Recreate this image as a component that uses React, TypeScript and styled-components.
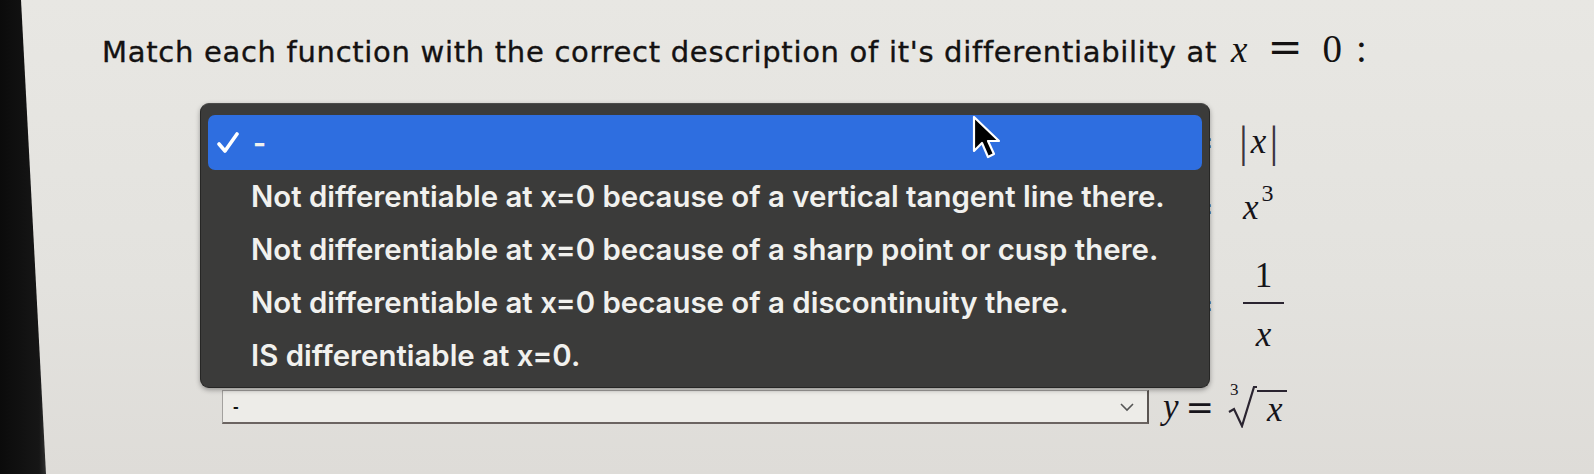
import styled, { createGlobalStyle } from 'styled-components';

const GlobalStyle = createGlobalStyle`
  html, body {
    margin: 0;
    padding: 0;
    background: #e3e2de;
  }
  #root {
    min-height: 474px;
  }
`;

const Screen = styled.div`
  display: flex;
  width: 1594px;
  height: 474px;
  overflow: hidden;
  background: linear-gradient(180deg, #e8e7e3 0%, #e3e2de 60%, #dedcd8 100%);
`;

// dark edge of the monitor, slanted by the camera angle
const Bezel = styled.div`
  width: 46px;
  flex-shrink: 0;
  background: linear-gradient(90deg, #0b0b0b 0%, #161616 85%, #303030 100%);
  clip-path: polygon(0 0, 21px 0, 46px 100%, 0 100%);
`;

const Page = styled.div`
  position: relative;
  flex: 1;
  padding: 26px 0 0 56px;
`;

const Question = styled.h1`
  margin: 0;
  font-family: 'DejaVu Sans', 'Open Sans', sans-serif;
  font-weight: 400;
  font-size: 29px;
  letter-spacing: 0.7px;
  line-height: 44px;
  color: #141212;
  -webkit-text-stroke: 0.35px #141212;
  display: flex;
  align-items: baseline;
  white-space: nowrap;
`;

const MathVar = styled.span<{ size?: number; ml?: number }>`
  font-family: 'Liberation Serif', 'DejaVu Serif', serif;
  font-style: italic;
  font-size: ${(p) => p.size ?? 35}px;
  margin-left: ${(p) => p.ml ?? 0}px;
  letter-spacing: 0;
  -webkit-text-stroke: 0;
`;

const MathOp = styled.span<{ gap?: number; size?: number }>`
  font-family: 'DejaVu Serif', 'Liberation Serif', serif;
  font-size: ${(p) => p.size ?? 34}px;
  margin: 0 ${(p) => p.gap ?? 10}px;
  letter-spacing: 0;
  -webkit-text-stroke: 0;
`;

const MathNum = styled.span`
  font-family: 'Liberation Serif', 'DejaVu Serif', serif;
  font-size: 39px;
  letter-spacing: 14px;
  -webkit-text-stroke: 0;
`;

const Rows = styled.div`
  display: flex;
  flex-direction: column;
  margin-top: 43px;
  margin-left: 120px;
`;

const Row = styled.div<{ h: number; mt?: number }>`
  display: flex;
  align-items: center;
  height: ${(p) => p.h}px;
  margin-top: ${(p) => p.mt ?? 0}px;
`;

const SelectBox = styled.div`
  display: flex;
  align-items: center;
  justify-content: space-between;
  width: 927px;
  height: 34px;
  box-sizing: border-box;
  padding: 0 12px 0 10px;
  background: #edece8;
  border: 1px solid #a3a19e;
  border-right: 2px solid #5a5552;
  border-bottom: 2px solid #6b6461;
  font-family: 'Liberation Sans', sans-serif;
  font-weight: 700;
  font-size: 17px;
  color: #111;
`;

const Chevron = styled.svg`
  width: 16px;
  height: 10px;
`;

const MathExpr = styled.div`
  display: flex;
  align-items: center;
  margin-left: 14px;
  color: #16141a;
  white-space: nowrap;
`;

const Abs = styled.span<{ ml?: number }>`
  font-family: 'Liberation Serif', serif;
  font-size: 44px;
  font-weight: 300;
  margin: 0 3px 0 ${(p) => p.ml ?? 3}px;
  color: #3a3440;
`;

const Sup = styled.span`
  font-family: 'Liberation Serif', serif;
  font-size: 24px;
  margin-left: 3px;
  transform: translateY(-15px);
`;

const Fraction = styled.span`
  display: inline-flex;
  flex-direction: column;
  align-items: center;
  font-family: 'Liberation Serif', serif;
  font-size: 35px;
  line-height: 34px;
  margin-left: 22px;
`;

const FracBar = styled.span`
  width: 41px;
  height: 2px;
  background: #2a2430;
  margin: 9px 0 14px;
`;

const Radical = styled.span`
  display: inline-flex;
  align-items: flex-end;
  position: relative;
  margin-left: 6px;
`;

const RootIndex = styled.span`
  font-family: 'Liberation Serif', serif;
  font-size: 17px;
  position: absolute;
  left: 3px;
  top: -6px;
`;

const Radicand = styled.span`
  font-family: 'Liberation Serif', serif;
  font-style: italic;
  font-size: 35px;
  border-top: 2px solid #2a2430;
  line-height: 36px;
  padding: 0 4px 0 10px;
`;

const Popup = styled.div`
  position: absolute;
  left: 154px;
  top: 103px;
  width: 1010px;
  height: 285px;
  box-sizing: border-box;
  padding: 11px 7px 0 7px;
  background: #3b3b3a;
  border: 1px solid #262625;
  border-top-color: #4c4c4b;
  border-radius: 9px;
  box-shadow: 0 2px 5px rgba(0, 0, 0, 0.35);
  font-family: 'Inter', 'Roboto', sans-serif;
  font-weight: 600;
  color: #f1f1ee;
`;

const SelectedOption = styled.div`
  display: flex;
  align-items: center;
  gap: 13px;
  height: 55px;
  padding-left: 8px;
  border-radius: 7px;
  background: #2e6ee0;
  font-size: 28px;
  font-weight: 700;
`;

const Option = styled.div`
  display: flex;
  align-items: center;
  height: 53px;
  padding-left: 43px;
  font-size: 29.4px;
  white-space: nowrap;
`;

const Cursor = styled.svg`
  position: absolute;
  left: 925px;
  top: 115px;
  width: 32px;
  height: 48px;
`;

const options = [
  'Not differentiable at x=0 because of a vertical tangent line there.',
  'Not differentiable at x=0 because of a sharp point or cusp there.',
  'Not differentiable at x=0 because of a discontinuity there.',
  'IS differentiable at x=0.',
];

function Select() {
  return (
    <SelectBox>
      <span>-</span>
      <Chevron viewBox="0 0 16 10">
        <path d="M2 2 L8 8 L14 2" fill="none" stroke="#555" strokeWidth="1.6" />
      </Chevron>
    </SelectBox>
  );
}

function YEquals() {
  return (
    <>
      <MathVar>y</MathVar>
      <MathOp gap={7}>=</MathOp>
    </>
  );
}

export default function App() {
  return (
    <>
      <GlobalStyle />
      <Screen>
        <Bezel />
        <Page>
          <Question>
            Match each function with the correct description of it's differentiability at&nbsp;
            <MathVar size={37} ml={4}>x</MathVar>
            <MathOp gap={20} size={42}>=</MathOp>
            <MathNum>0:</MathNum>
          </Question>

          <Rows>
            <Row h={50}>
              <Select />
              <MathExpr>
                <YEquals />
                <Abs ml={18}>|</Abs>
                <MathVar>x</MathVar>
                <Abs>|</Abs>
              </MathExpr>
            </Row>
            <Row h={82}>
              <Select />
              <MathExpr>
                <YEquals />
                <MathVar ml={22}>x</MathVar>
                <Sup>3</Sup>
              </MathExpr>
            </Row>
            <Row h={112}>
              <Select />
              <MathExpr>
                <YEquals />
                <Fraction>
                  <span>1</span>
                  <FracBar />
                  <MathVar>x</MathVar>
                </Fraction>
              </MathExpr>
            </Row>
            <Row h={34} mt={29}>
              <Select />
              <MathExpr>
                <YEquals />
                <Radical>
                  <RootIndex>3</RootIndex>
                  <svg width="30" height="42" viewBox="0 0 30 42">
                    <path d="M2 26 L7 23 L15 40 L27 1 L30 1" fill="none" stroke="#2a2430" strokeWidth="2.2" />
                  </svg>
                  <Radicand>x</Radicand>
                </Radical>
              </MathExpr>
            </Row>
          </Rows>

          <Popup>
            <SelectedOption>
              <svg width="24" height="22" viewBox="0 0 24 22">
                <path d="M3 12 L9 19 L21 2" fill="none" stroke="#fff" strokeWidth="3.6" strokeLinecap="round" strokeLinejoin="round" />
              </svg>
              <span>-</span>
            </SelectedOption>
            {options.map((text) => (
              <Option key={text}>{text}</Option>
            ))}
          </Popup>

          <Cursor viewBox="0 0 32 48">
            <path
              d="M3 2 L3 36 L11 28 L17 42 L23 39 L17 26 L28 26 Z"
              fill="#000"
              stroke="#fff"
              strokeWidth="2.2"
              strokeLinejoin="round"
            />
          </Cursor>
        </Page>
      </Screen>
    </>
  );
}
